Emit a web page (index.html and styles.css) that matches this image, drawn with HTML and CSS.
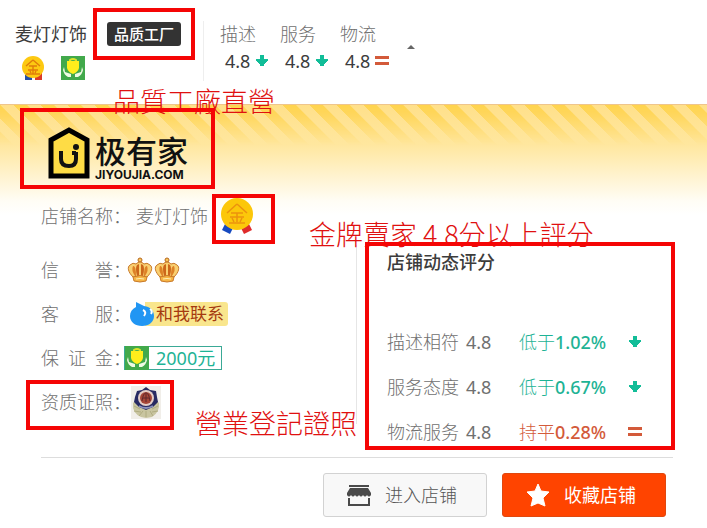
FILE: index.html
```html
<!DOCTYPE html>
<html lang="zh-CN">
<head>
  <meta charset="UTF-8" />
  <meta name="viewport" content="width=device-width, initial-scale=1.0"/>
  <title>麦灯灯饰</title>
  <link rel="stylesheet" href="styles.css">
</head>
<body>

  <!-- shared icons -->
  <svg class="defs" width="0" height="0" aria-hidden="true">
    <symbol id="down" viewBox="0 0 14 14">
      <path d="M5 1h4v4h4v2h-1v1h-1v1h-1v1H9v2H5v-2H4V9H3V8H2V7H1V5h4z" fill="#12bd98"/>
    </symbol>
    <symbol id="equal" viewBox="0 0 14 14">
      <path d="M0 2h14v3H0zM0 8h14v3H0z" fill="#d35a3a"/>
    </symbol>
    <symbol id="deposit" viewBox="0 0 24 24">
      <path d="M0 0h24v24H0z" fill="#42a94b"/>
      <path d="M9 5V4q3-2 6 0v1" fill="none" stroke="#d9e32c" stroke-width="2"/>
      <path d="M6 5h12v7q-1 4-6 6-5-2-6-6z" fill="#ffee1c"/>
      <path d="M3 11l1 5 6 2v3H7q-4-2-5-7zM21 11l-1 5-6 2v3h3q4-2 5-7z" fill="#effbe4"/>
    </symbol>
    <symbol id="crown" viewBox="0 0 26 26">
      <circle cx="13" cy="3" r="2" fill="#f9c75c" stroke="#b5651d"/>
      <path d="M6 20C1 15 0 10 3 8q3-3 6-1 4-4 8 0 3-2 6 1c3 2 2 7-3 12z" fill="#f9cf70" stroke="#c8792a"/>
      <path d="M8 19Q4 13 6 9q3-1 3 10zM18 19q4-6 2-10-3-1-3 10z" fill="#dd8126"/>
      <path d="M10 19Q8 11 10 8l2-1v12zM16 19q2-8 0-11l-2-1v12z" fill="#cc661a"/>
      <path d="M6 20q7-3 14 0l-1 4q-6 2-12 0z" fill="#f7b545" stroke="#c8792a"/>
      <path d="M9 22q4-1 8 0" fill="none" stroke="#fff0b4"/>
    </symbol>
  </svg>

  <div class="page">

    <header class="header">
      <div class="shop">
        <div class="shop-title">
          <span>麦灯灯饰</span>
          <span class="tag">品质工厂</span>
        </div>
        <div class="shop-icons">
          <svg class="icon-24" viewBox="0 0 24 24">
            <path d="M3 17h7v7H3z" fill="#244fa8"/>
            <path d="M13 17h7v7h-7z" fill="#dc3a28"/>
            <path d="M10 20h3v4h-3z" fill="#f4f4f4"/>
            <circle cx="11" cy="11" r="11" fill="#fdc911"/>
            <path d="M11 4L4 10M11 4l7 6M7 10h8M6 14h10M11 10v8M4 18h14M8 15l1 2M14 15l-1 2" fill="none" stroke="#e07d0a" stroke-width="1.4"/>
          </svg>
          <svg class="icon-24"><use href="#deposit"/></svg>
        </div>
      </div>
      <div class="stats">
        <div class="stat">
          <div>描述</div>
          <div class="stat-value">4.8 <svg class="icon-14"><use href="#down"/></svg></div>
        </div>
        <div class="stat">
          <div>服务</div>
          <div class="stat-value">4.8 <svg class="icon-14"><use href="#down"/></svg></div>
        </div>
        <div class="stat">
          <div>物流</div>
          <div class="stat-value">4.8 <svg class="icon-14"><use href="#equal"/></svg></div>
        </div>
      </div>
      <button class="toggle" title="收起"></button>
    </header>

    <main class="panel">
      <a class="logo" href="#">
        <svg class="logo-mark" viewBox="0 0 42 52">
          <path d="M3 13L21 3l18 10v36H3z" fill="#fedc45" stroke="#000" stroke-width="5"/>
          <path d="M13 25v7q0 7 8 7 7 0 7-7v-7M11 26h4M24 26h4" fill="none" stroke="#111" stroke-width="4"/>
          <circle cx="28" cy="20" r="3" fill="#111"/>
        </svg>
        <span class="logo-text">
          <span class="logo-cn">极有家</span>
          <span class="logo-en">JIYOUJIA.COM</span>
        </span>
      </a>

      <div class="row shop-name">
        <span class="label">店铺名称</span>：
        <span class="shop-value">麦灯灯饰</span>
        <svg class="medal" viewBox="0 0 34 38">
          <path d="M5 27l8 4-3 6-8-4z" fill="#1649c0"/>
          <path d="M29 27l-8 4 3 6 8-4z" fill="#df2b2b"/>
          <circle cx="17" cy="17" r="16" fill="#fcc70a"/>
          <path d="M17 7L7 16M17 7l10 9M11 16h12M10 20h14M17 16v9M9 26h16M12 21l2 4M22 21l-2 4" fill="none" stroke="#ec920e" stroke-width="1.5"/>
        </svg>
      </div>

      <div class="columns">
        <div class="info">
          <div class="row">
            <span class="label">信 誉</span>：
            <svg class="crown"><use href="#crown"/></svg>
            <svg class="crown"><use href="#crown"/></svg>
          </div>
          <div class="row">
            <span class="label">客 服</span>：
            <a class="contact" href="#">
              <svg class="drop" viewBox="0 0 26 26">
                <path d="M7 1l8 4c7 1 10 5 10 10 0 6-5 10-12 10S1 21 1 15c0-4 2-7 6-9z" fill="#2196f3"/>
                <path d="M14 9q4 2 1 6M21 8q3 2 1 5" fill="none" stroke="#fff" stroke-width="2"/>
              </svg>
              <span>和我联系</span>
            </a>
          </div>
          <div class="row">
            <span class="label">保 证 金</span>：
            <span class="deposit"><svg class="icon-24"><use href="#deposit"/></svg><span>2000元</span></span>
          </div>
          <div class="row">
            <span class="label">资质证照</span>：
            <svg class="police" viewBox="0 0 30 33">
              <path d="M0 0h30v33H0z" fill="#f1eee9"/>
              <path d="M2 17q-1 10 8 14l5 1 6-1q8-5 7-14l-5-5H7z" fill="#c9c5a0"/>
              <path d="M3 20l6 3M3 25l7 1M8 30l4-5M15 31v-6M22 30l-3-5M27 25l-6 1M27 20l-6 3" stroke="#b0ac80"/>
              <path d="M15 1l4 3 6 1 1 6 1 5-5 5-7 3-7-3-5-5 1-5 2-6 5-1z" fill="#282a62"/>
              <circle cx="15" cy="12" r="8" fill="#e4cdc6"/>
              <circle cx="15" cy="12" r="6" fill="#a64638"/>
              <path d="M11 15q1-8 4-8t4 8M12 12h6M15 8v8" fill="none" stroke="#5f262c"/>
              <path d="M8 20q7 4 14 0" fill="none" stroke="#8b91bd" stroke-width="2"/>
            </svg>
          </div>
        </div>

        <div class="score">
          <h2>店铺动态评分</h2>
          <table>
            <tr class="low"><th>描述相符</th><td class="num">4.8</td><td class="diff">低于<b>1.02%</b></td><td><svg class="icon-14"><use href="#down"/></svg></td></tr>
            <tr class="low"><th>服务态度</th><td class="num">4.8</td><td class="diff">低于<b>0.67%</b></td><td><svg class="icon-14"><use href="#down"/></svg></td></tr>
            <tr class="flat"><th>物流服务</th><td class="num">4.8</td><td class="diff">持平<b>0.28%</b></td><td><svg class="icon-14"><use href="#equal"/></svg></td></tr>
          </table>
        </div>
      </div>

      <div class="actions">
        <button class="btn">
          <svg class="icon-24" viewBox="0 0 24 24">
            <path d="M2 2h20v2H2zM3 5h18l3 5v2q-2 3-4 0-2 3-4 0-2 3-4 0-2 3-4 0-2 3-4 0-2 3-4 0v-2z" fill="#4a4a4a"/>
            <path d="M2 15v7h20v-7" fill="none" stroke="#4a4a4a" stroke-width="2"/>
          </svg>
          进入店铺
        </button>
        <button class="btn btn-primary">
          <svg class="icon-24" viewBox="0 0 24 24">
            <path d="M12 1l3 7 8 1-6 6 2 8-7-3-7 3 2-8-6-6 8-1z" fill="#fff" stroke="#fff" stroke-linejoin="round"/>
          </svg>
          收藏店铺
        </button>
      </div>
    </main>

    <!-- notes drawn over the card -->
    <div class="note note-factory" lang="zh-TW">品質工廠直營</div>
    <div class="note note-gold" lang="zh-TW">金牌賣家 4.8分以上評分</div>
    <div class="note note-license" lang="zh-TW">營業登記證照</div>
    <div class="mark mark-tag"></div>
    <div class="mark mark-logo"></div>
    <div class="mark mark-medal"></div>
    <div class="mark mark-license"></div>
    <div class="mark mark-score"></div>
  </div>

</body>
</html>
```
FILE: styles.css
```css
:root {
  --text: #707070;
  --dark: #3c3c3c;
  --green: #1eb395;
  --orange: #d35a3a;
  --red: #f50505;
}

* {
  box-sizing: border-box;
}

body {
  margin: 0;
  background: #fff;
  color: var(--text);
  font-family: "Noto Sans", "Noto Sans CJK SC", sans-serif;
  font-size: 18px;
  font-weight: 300;
  line-height: 24px;
}

svg {
  display: block;
  flex: none;
}

.defs {
  position: absolute;
}

.page {
  position: relative;
}

.icon-24 {
  width: 24px;
  height: 24px;
}

.icon-14 {
  width: 14px;
  height: 14px;
}

/* header */
.header {
  display: flex;
  align-items: flex-start;
  padding: 21px 15px 23px;
  border-bottom: 1px solid #efc58c;
}

.shop {
  width: 189px;
  height: 60px;
  border-right: 1px solid #eee;
  color: var(--dark);
}

.shop-title {
  display: flex;
  align-items: center;
  gap: 20px;
  height: 26px;
  font-weight: 400;
}

.tag {
  padding: 0 7px;
  border-radius: 3px;
  background: #333;
  color: #fff;
  font-size: 15px;
  font-weight: 500;
}

.shop-icons {
  display: flex;
  gap: 15px;
  padding: 9px 0 0 7px;
}

.stats {
  display: flex;
  padding-left: 16px;
}

.stat {
  width: 60px;
  line-height: 26px;
}

.stat-value {
  display: flex;
  align-items: center;
  gap: 5px;
  padding: 1px 0 0 5px;
  color: var(--dark);
  font-weight: 400;
}

.toggle {
  width: 8px;
  height: 4px;
  margin: 24px 0 0 7px;
  padding: 0;
  border: none;
  background: #666;
  clip-path: polygon(50% 0, 100% 100%, 0 100%);
  cursor: pointer;
}

/* panel */
.panel {
  position: relative;
  padding: 22px 34px 0 41px;
  background: linear-gradient(#ffe08a, #ffe79f 40px, #fff3d0 72px, #fffdf5 96px, #fff 110px);
}

.panel::before {
  content: "";
  position: absolute;
  inset: 0 0 auto;
  height: 40px;
  background: repeating-linear-gradient(45deg, #ffd03e 0 9px, transparent 10px 19px);
  mask-image: linear-gradient(rgba(0,0,0,0.8), transparent);
}

.logo {
  display: flex;
  position: relative;
  gap: 5px;
  width: max-content;
  height: 54px;
  margin-left: 7px;
  color: #111;
  text-decoration: none;
}

.logo-mark {
  width: 42px;
  height: 52px;
}

.logo-text {
  display: flex;
  flex-direction: column;
}

.logo-cn {
  padding-top: 6px;
  font-size: 31px;
  font-weight: 500;
  line-height: 36px;
}

.logo-en {
  font-family: Inter, Arial, sans-serif;
  font-size: 12px;
  font-weight: 700;
  line-height: 12px;
}

.row {
  display: flex;
  align-items: center;
  height: 44px;
}

.label {
  width: 72px;
  text-align-last: justify;
}

.shop-name {
  height: 38px;
  margin-top: 16px;
}

.shop-value {
  padding: 0 12px 0 5px;
}

.medal {
  width: 34px;
  height: 38px;
}

.columns {
  display: grid;
  grid-template-columns: 1fr 1fr;
  margin-top: 10px;
  padding-bottom: 3px;
  border-bottom: 1px solid #ddd;
}

.info {
  align-self: start;
  padding-top: 3px;
  border-right: 1px solid #e6e6e6;
}

.crown {
  width: 26px;
  height: 26px;
  margin: 0 4px 0 -4px;
}

.crown + .crown {
  margin-left: -3px;
}

.contact {
  display: flex;
  align-items: center;
  height: 24px;
  margin-left: -2px;
  padding-right: 4px;
  border-radius: 3px;
  background: linear-gradient(90deg, transparent 16px, #f9e68d 16px);
  color: #a53a10;
  font-size: 17px;
  font-weight: 400;
  text-decoration: none;
}

.drop {
  width: 26px;
  height: 26px;
  margin-right: 1px;
}

.deposit {
  display: flex;
  align-items: center;
  height: 24px;
  margin-left: -7px;
  padding-right: 6px;
  border: 1px solid #3aa996;
  color: var(--green);
  font-weight: 400;
  line-height: 22px;
}

.deposit span {
  padding-left: 7px;
}

.police {
  width: 30px;
  height: 33px;
}

.score {
  padding-left: 30px;
}

.score h2 {
  margin: 0 0 40px;
  color: var(--dark);
  font-size: 18px;
  font-weight: 500;
  line-height: 34px;
}

.score table {
  border-collapse: collapse;
}

.score th,
.score td {
  height: 45px;
  padding: 0;
  font-weight: 300;
  text-align: left;
}

.score th {
  width: 79px;
}

.score .num {
  width: 53px;
  font-weight: 400;
}

.score .diff {
  width: 109px;
}

.score .diff b {
  font-weight: 500;
}

.low .diff {
  color: var(--green);
}

.flat .diff {
  color: var(--orange);
}

/* actions */
.actions {
  display: flex;
  justify-content: flex-end;
  gap: 15px;
  padding: 15px 7px 11px 0;
}

.btn {
  display: flex;
  align-items: center;
  justify-content: center;
  gap: 14px;
  width: 164px;
  height: 44px;
  padding: 0 12px 0 6px;
  border: 1px solid #d2d2d2;
  border-radius: 3px;
  background: #f8f8f8;
  color: #555;
  font: inherit;
  cursor: pointer;
}

.btn-primary {
  border-color: #e0480f;
  background: #ff4400;
  color: #fff;
  font-weight: 400;
}

/* notes */
.note {
  position: absolute;
  color: #e01010;
  font-family: "Noto Sans CJK TC", sans-serif;
  font-size: 27px;
  line-height: 32px;
  white-space: nowrap;
}

.note-factory {
  left: 113px;
  top: 85px;
}

.note-gold {
  left: 309px;
  top: 218px;
}

.note-license {
  left: 195px;
  top: 407px;
}

.mark {
  position: absolute;
  border: 4px solid var(--red);
}

.mark-tag {
  left: 93px;
  top: 8px;
  width: 102px;
  height: 52px;
}

.mark-logo {
  left: 20px;
  top: 108px;
  width: 195px;
  height: 81px;
}

.mark-medal {
  left: 212px;
  top: 194px;
  width: 63px;
  height: 50px;
}

.mark-license {
  left: 26px;
  top: 380px;
  width: 148px;
  height: 50px;
}

.mark-score {
  left: 365px;
  top: 242px;
  width: 310px;
  height: 208px;
}
```
